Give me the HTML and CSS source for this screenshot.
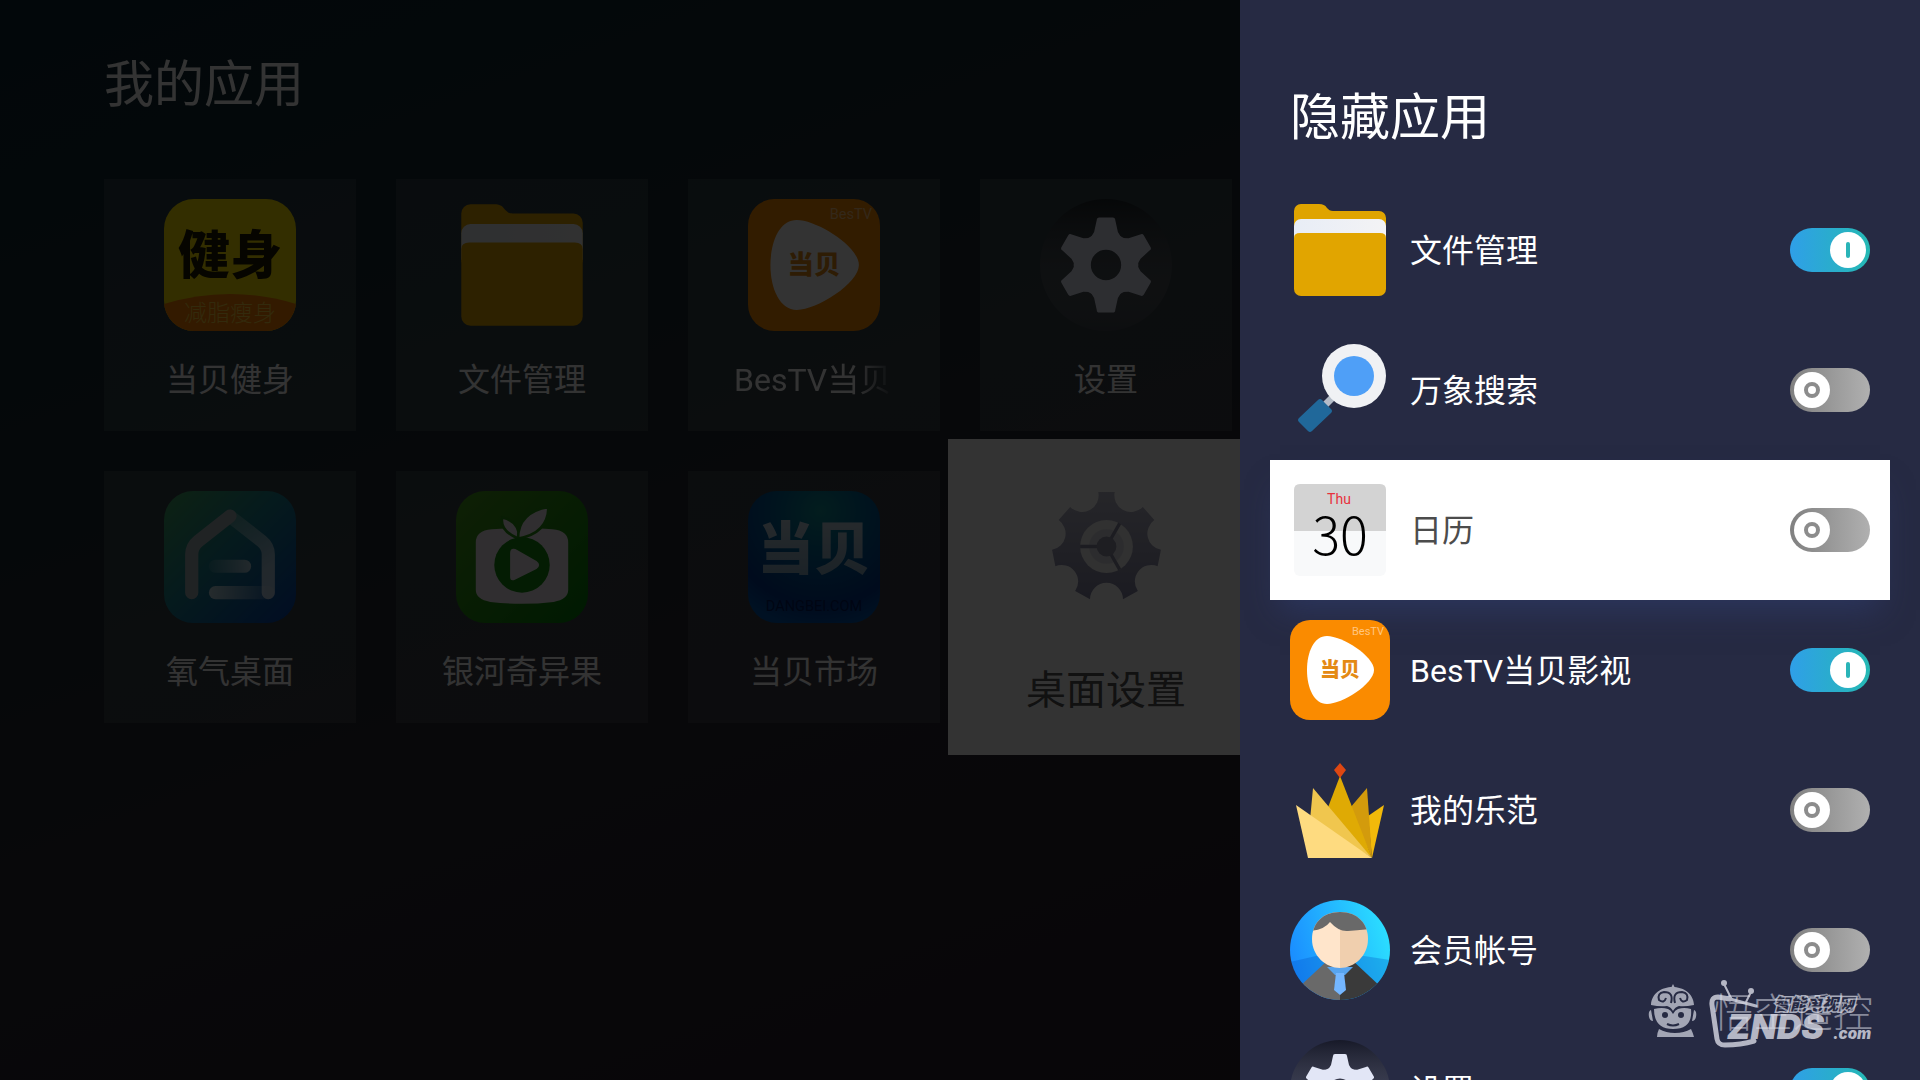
FILE: index.html
```html
<!DOCTYPE html>
<html lang="zh-CN">
<head>
    <meta charset="UTF-8">
    <meta name="viewport" content="width=device-width, initial-scale=1.0">
    <title>隐藏应用</title>
    <link rel="stylesheet" href="styles.css">
</head>
<body>

    <!-- Shared icons -->
    <svg class="sprite" aria-hidden="true">
        <defs>
            <linearGradient id="paper" x1="0" y1="0" x2="1" y2="0">
                <stop offset="0" stop-color="#e8edf6"/>
                <stop offset="1" stop-color="#f3f3f5"/>
            </linearGradient>
            <linearGradient id="gearDisc" x1="0" y1="0" x2="0" y2="1">
                <stop offset="0" stop-color="#000" stop-opacity=".4"/>
                <stop offset="1" stop-color="#fff" stop-opacity=".04"/>
            </linearGradient>
        </defs>

        <symbol id="folder" viewBox="0 0 100 100">
            <path fill="#dfa400" d="M4 11a7 7 0 0 1 7-7h18c4 0 6 1 8 4 2 2 3 3 6 3h46a7 7 0 0 1 7 7v30H4z"/>
            <path fill="url(#paper)" d="M4 26a7 7 0 0 1 7-7h78a7 7 0 0 1 7 7v20H4z"/>
            <path fill="#e1a500" d="M4 38q0-5 6-5h80q6 0 6 5V89a7 7 0 0 1-7 7H11a7 7 0 0 1-7-7z"/>
        </symbol>

        <symbol id="bestv" viewBox="0 0 100 100">
            <rect fill="#fa8b00" width="100" height="100" rx="20"/>
            <path fill="#fff" d="M37 16C52 16 84 36 84 50S52 84 37 84C24 84 17 68 17 50S24 16 37 16z"/>
            <text class="icon-black" x="50" y="57" font-size="20" fill="#e48a14">当贝</text>
            <text class="icon-latin" x="78" y="15" font-size="11" fill="#ffc680">BesTV</text>
        </symbol>

        <symbol id="gear" viewBox="0 0 100 100">
            <circle cx="50" cy="50" r="50" fill="url(#gearDisc)"/>
            <g transform="translate(50 50)" fill="#e2e6f6">
                <circle r="18" fill="none" stroke="#e2e6f6" stroke-width="13"/>
                <path id="tooth" d="M-5-36H5q2 0 2 2l2 9 3 5H-12l3-5 2-9q0-2 2-2z"/>
                <use href="#tooth" transform="rotate(60)"/>
                <use href="#tooth" transform="rotate(120)"/>
                <use href="#tooth" transform="rotate(180)"/>
                <use href="#tooth" transform="rotate(240)"/>
                <use href="#tooth" transform="rotate(300)"/>
            </g>
        </symbol>
    </svg>

    <main class="desktop">
        <h1 class="title">我的应用</h1>
        <div class="apps">
            <button class="app" type="button">
                <svg class="app-icon" viewBox="0 0 132 132" aria-hidden="true">
                    <clipPath id="fitClip"><rect width="132" height="132" rx="30"/></clipPath>
                    <g clip-path="url(#fitClip)">
                        <rect width="132" height="132" fill="#fee600"/>
                        <path fill="#ff8000" d="M0 105Q66 85 132 105V132H0z"/>
                    </g>
                    <text class="icon-black" x="66" y="75" font-size="52" fill="#201c00">健身</text>
                    <text class="icon-thin" x="66" y="122" font-size="23" fill="#ffd040">减脂瘦身</text>
                </svg>
                <span class="app-name">当贝健身</span>
            </button>
            <button class="app" type="button">
                <svg class="app-icon" aria-hidden="true"><use href="#folder"/></svg>
                <span class="app-name">文件管理</span>
            </button>
            <button class="app" type="button">
                <svg class="app-icon" aria-hidden="true"><use href="#bestv"/></svg>
                <span class="app-name fade">BesTV当贝影视</span>
            </button>
            <button class="app" type="button">
                <svg class="app-icon" aria-hidden="true"><use href="#gear"/></svg>
                <span class="app-name">设置</span>
            </button>
            <button class="app" type="button">
                <svg class="app-icon" viewBox="0 0 100 100" aria-hidden="true">
                    <defs>
                        <linearGradient id="homeBg" x1="0" y1="0" x2="1" y2="1">
                            <stop offset="0" stop-color="#44a860"/>
                            <stop offset=".45" stop-color="#1c8290"/>
                            <stop offset="1" stop-color="#0640b0"/>
                        </linearGradient>
                        <linearGradient id="roof" gradientUnits="userSpaceOnUse" x1="50" y1="18" x2="79" y2="60">
                            <stop offset="0" stop-color="#fff" stop-opacity=".2"/>
                            <stop offset="1" stop-color="#fff" stop-opacity=".65"/>
                        </linearGradient>
                        <linearGradient id="bar" gradientUnits="userSpaceOnUse" x1="35" y1="0" x2="66" y2="0">
                            <stop offset="0" stop-color="#fff" stop-opacity=".1"/>
                            <stop offset="1" stop-color="#fff" stop-opacity=".65"/>
                        </linearGradient>
                        <linearGradient id="floor" gradientUnits="userSpaceOnUse" x1="35" y1="0" x2="79" y2="0">
                            <stop offset="0" stop-color="#fff" stop-opacity=".7"/>
                            <stop offset="1" stop-color="#fff" stop-opacity=".1"/>
                        </linearGradient>
                    </defs>
                    <rect width="100" height="100" rx="22" fill="url(#homeBg)"/>
                    <g fill="none" stroke-width="10" stroke-linecap="round" stroke-linejoin="round">
                        <path stroke="url(#floor)" d="M39 77H79"/>
                        <path stroke="url(#bar)" d="M39 57H61"/>
                        <path stroke="url(#roof)" d="M51 20L74 38q5 4 5 10V77"/>
                        <path stroke="#a2afb4" d="M50 19L26 38q-5 4-5 10V77"/>
                    </g>
                </svg>
                <span class="app-name">氧气桌面</span>
            </button>
            <button class="app" type="button">
                <svg class="app-icon" viewBox="0 0 100 100" aria-hidden="true">
                    <defs>
                        <linearGradient id="green" x1="0" y1="0" x2="1" y2="1">
                            <stop offset="0" stop-color="#4a9c1c"/>
                            <stop offset="1" stop-color="#008008"/>
                        </linearGradient>
                    </defs>
                    <rect width="100" height="100" rx="22" fill="url(#green)"/>
                    <path fill="#eee6ee" d="M27 29q23-2 46 0 12 1 12 10V75q0 7-11 9-24 3-48 0-11-2-11-9V39q0-9 12-10z"/>
                    <g fill="#eee6ee" stroke="#2c9014" stroke-width="2">
                        <path d="M47 36Q33 30 35 20 48 23 48 36z"/>
                        <path d="M47 36Q47 16 70 12 70 32 47 36z"/>
                    </g>
                    <circle cx="50" cy="56" r="21" fill="#168a10"/>
                    <path fill="#eee6ee" d="M41 47q0-4 4-3l16 9q4 3 0 6L45 67q-4 2-4-2z"/>
                </svg>
                <span class="app-name">银河奇异果</span>
            </button>
            <button class="app" type="button">
                <svg class="app-icon" viewBox="0 0 100 100" aria-hidden="true">
                    <defs>
                        <radialGradient id="market" cx=".55" cy=".15" r=".9">
                            <stop offset="0" stop-color="#109098"/>
                            <stop offset=".4" stop-color="#006098"/>
                            <stop offset=".8" stop-color="#003890"/>
                            <stop offset="1" stop-color="#0058b0"/>
                        </radialGradient>
                        <linearGradient id="silver" x1="0" y1="0" x2="0" y2="1">
                            <stop offset="0" stop-color="#cfdbe6"/>
                            <stop offset="1" stop-color="#7fa5bd"/>
                        </linearGradient>
                    </defs>
                    <rect width="100" height="100" rx="22" fill="url(#market)"/>
                    <text class="icon-black" x="50" y="59" font-size="43" fill="url(#silver)">当贝</text>
                    <text class="icon-latin" x="50" y="91" font-size="11" fill="#001c60">DANGBEI.COM</text>
                </svg>
                <span class="app-name">当贝市场</span>
            </button>
            <button class="app focused" type="button">
                <svg class="app-icon" viewBox="0 0 100 100" aria-hidden="true">
                    <defs>
                        <linearGradient id="steel" x1="0" y1="0" x2="0" y2="1">
                            <stop offset="0" stop-color="#bcbccc"/>
                            <stop offset="1" stop-color="#8686a6"/>
                        </linearGradient>
                    </defs>
                    <g transform="translate(50 50)">
                        <path fill="url(#steel)" d="M-5-33H5A10 10 0 0 0 22-24L29-16A10 10 0 0 0 33 2L31 12A10 10 0 0 0 19 27L10 32A10 10 0 0 0-10 32L-19 27A10 10 0 0 0-31 12L-33 2A10 10 0 0 0-29-16L-22-24A10 10 0 0 0-5-33z"/>
                        <circle r="16" fill="#f2f2f2"/>
                        <circle r="8" fill="none" stroke="#dcdce4" stroke-width="5"/>
                        <path stroke="#8c8ca4" stroke-width="2" d="M0 0H-16M0 0L8-14M0 0L8 14"/>
                        <circle r="6" fill="#9494ac"/>
                    </g>
                </svg>
                <span class="app-name">桌面设置</span>
            </button>
        </div>
    </main>

    <aside class="panel">
        <h2 class="title panel-title">隐藏应用</h2>
        <ul class="hide-list">
            <li>
                <label class="row">
                    <svg class="row-icon" aria-hidden="true"><use href="#folder"/></svg>
                    <span class="row-name">文件管理</span>
                    <input class="switch" type="checkbox" checked>
                </label>
            </li>
            <li>
                <label class="row">
                    <svg class="row-icon" viewBox="0 0 100 100" aria-hidden="true">
                        <path stroke="#b4bcc8" stroke-width="7" d="M34 66L46 54"/>
                        <path fill="#20689a" d="M28 60q2-2 4 0l9 9q2 2 0 4L22 91q-2 2-4 0L9 82q-2-2 0-4z"/>
                        <circle cx="64" cy="36" r="32" fill="#f0f1f4"/>
                        <circle cx="64" cy="36" r="20" fill="#4f9ff7"/>
                    </svg>
                    <span class="row-name">万象搜索</span>
                    <input class="switch" type="checkbox">
                </label>
            </li>
            <li>
                <label class="row focused">
                    <svg class="row-icon" viewBox="0 0 100 100" aria-hidden="true">
                        <rect x="4" y="4" width="92" height="92" rx="6" fill="#f8f9fa"/>
                        <path fill="#d3d3d3" d="M4 51V10q0-6 6-6h80q6 0 6 6V51z"/>
                        <text class="icon-latin" x="49" y="24" font-size="14" fill="#e8303c">Thu</text>
                        <text class="icon-thin" x="50" y="75" font-size="52" fill="#000">30</text>
                    </svg>
                    <span class="row-name">日历</span>
                    <input class="switch" type="checkbox">
                </label>
            </li>
            <li>
                <label class="row">
                    <svg class="row-icon" aria-hidden="true"><use href="#bestv"/></svg>
                    <span class="row-name">BesTV当贝影视</span>
                    <input class="switch" type="checkbox" checked>
                </label>
            </li>
            <li>
                <label class="row">
                    <svg class="row-icon" viewBox="0 0 100 100" aria-hidden="true">
                        <path fill="#f2b90a" d="M94 45L82 98 78 56z"/>
                        <path fill="#d39b0c" d="M77 28L82 98 60 48z"/>
                        <path fill="#dfaa04" d="M50 16L82 98 37 50z"/>
                        <path fill="#f0c64e" d="M23 28L82 98 20 60z"/>
                        <path fill="#fedb80" d="M6 45L82 98H18z"/>
                        <path fill="#dd4712" d="M50 3l6 7-6 8-6-8z"/>
                    </svg>
                    <span class="row-name">我的乐范</span>
                    <input class="switch" type="checkbox">
                </label>
            </li>
            <li>
                <label class="row">
                    <svg class="row-icon" viewBox="0 0 100 100" aria-hidden="true">
                        <defs>
                            <linearGradient id="sky" x1="0" y1=".6" x2="1" y2=".3">
                                <stop offset="0" stop-color="#1a8cff"/>
                                <stop offset="1" stop-color="#2ce0ff"/>
                            </linearGradient>
                            <clipPath id="disc"><circle cx="50" cy="50" r="50"/></clipPath>
                            <clipPath id="head"><path d="M50 12C68 12 78 24 78 39 78 56 64 68 50 68S22 56 22 39C22 24 32 12 50 12z"/></clipPath>
                        </defs>
                        <g clip-path="url(#disc)">
                            <rect width="100" height="100" fill="url(#sky)"/>
                            <path fill="#0050c0" fill-opacity=".3" d="M0 62L26 56H74L100 60V100H0z"/>
                            <path fill="#696969" d="M50 60H38L8 88V100H50z"/>
                            <path fill="#3a3a3a" d="M50 60H62L92 88V100H50z"/>
                            <path fill="#58a4ee" d="M37 67H63L55 75H45z"/>
                            <path fill="#74b6ff" d="M46 73H54L56 90 50 95 44 90z"/>
                        </g>
                        <g clip-path="url(#head)">
                            <rect width="50" height="100" fill="#ffe5cb"/>
                            <rect x="50" width="50" height="100" fill="#f0cfae"/>
                            <path fill="#696969" d="M20 31Q34 30 40 22 49 32 58 31T80 29V0H20z"/>
                        </g>
                    </svg>
                    <span class="row-name">会员帐号</span>
                    <input class="switch" type="checkbox">
                </label>
            </li>
            <li>
                <label class="row">
                    <svg class="row-icon" aria-hidden="true"><use href="#gear"/></svg>
                    <span class="row-name">设置</span>
                    <input class="switch" type="checkbox" checked>
                </label>
            </li>
        </ul>
    </aside>

    <!-- Watermark -->
    <svg class="watermark" viewBox="0 0 240 76" aria-hidden="true">
        <g fill="#a2a5b4">
            <path d="M11 29C12 5 53 5 54 29q-10 2-15 1-4 1-6 5-2-4-6-5-7 1-16-1z"/>
            <path d="M31 12l2-4 2 4z"/>
            <path d="M14 33q8-2 14 0 3 1 5 5 2-4 5-5 6-2 13 0 2 20-18 20-19 0-19-20z"/>
            <path d="M11 34q-3 1-2 7 1 4 4 4zM54 34q3 1 2 7-1 4-4 4zM19 53q-2 4-2 8h37q-1-4-3-8-7 4-16 4t-16-4z"/>
        </g>
        <g fill="none" stroke="#262a43" stroke-width="2">
            <path d="M31 27q3-11-7-11-7 1-5 8 5 4 7-2M35 27q-3-11 7-11 7 1 5 8-5 4-7-2"/>
            <path d="M27 48q6 3 12 0"/>
        </g>
        <g fill="#262a43"><circle cx="25" cy="39" r="3"/><circle cx="41" cy="39" r="3"/></g>
        <g fill="none" stroke="#b4b6c4" stroke-linecap="round">
            <path stroke-width="5" d="M90 23L78 21q-7 0-6 8l5 34q1 6 8 6 16 0 29-4"/>
            <path stroke-width="3" d="M90 23L116 30"/>
            <path stroke-width="2" d="M91 22L84 8M106 26l5-10"/>
        </g>
        <circle cx="84" cy="7" r="3" fill="#b4b6c4"/>
        <circle cx="111" cy="15" r="3" fill="#b4b6c4"/>
        <text class="mark-site" x="134" y="34" font-size="16">智能电视网</text>
        <text class="mark-logo" x="87" y="63" font-size="34">ZNDS</text>
        <text class="mark-logo" x="193" y="63" font-size="15">.com</text>
        <text class="mark-name" x="73" y="51" font-size="40">悟空遥控</text>
    </svg>

</body>
</html>
```

FILE: styles.css
```css
/* General Styling */
* {
    box-sizing: border-box;
}

body {
    font-family: Roboto, "Noto Sans CJK SC", sans-serif;
    margin: 0;
    display: flex;
    height: 100vh;
    background: #262a43;
    color: #fff;
    overflow: hidden;
    position: relative;
}

.sprite {
    position: absolute;
    width: 0;
    height: 0;
}

.title {
    margin: 0;
    font-size: 50px;
    line-height: 60px;
    font-weight: 400;
}

/* Desktop behind the panel */
.desktop {
    flex: 1;
    min-width: 0;
    padding: 55px 0 0 104px;
    background: linear-gradient(160deg, #0c2632 0%, #1c2c34 35%, #2a2a34 60%, #281e2c 100%);
    position: relative;
    overflow: hidden;
}

.desktop::after {
    content: "";
    position: absolute;
    inset: 0;
    background: rgba(0, 0, 0, 0.8);
}

.apps {
    display: grid;
    grid-template-columns: repeat(4, 252px);
    grid-auto-rows: 252px;
    gap: 40px;
    margin-top: 64px;
}

.app {
    display: flex;
    flex-direction: column;
    align-items: center;
    gap: 28px;
    padding: 20px;
    border: none;
    background: rgba(255, 255, 255, 0.1);
    color: #fff;
    font-family: inherit;
    font-size: 32px;
    line-height: 42px;
    cursor: pointer;
}

.app-icon {
    flex: none;
    width: 132px;
    height: 132px;
}

.app-name {
    max-width: 160px;
    overflow: hidden;
    white-space: nowrap;
}

.app-name.fade {
    mask-image: linear-gradient(90deg, #000 75%, transparent 100%);
}

.app.focused {
    margin: -32px;
    padding: 25px;
    gap: 36px;
    background: #fff;
    color: #555;
    font-size: 40px;
    line-height: 52px;
}

.app.focused .app-icon {
    width: 165px;
    height: 165px;
}

/* Side panel */
.panel {
    flex: none;
    width: 680px;
    padding: 88px 30px 0;
    background: #262a43;
    overflow: hidden;
}

.panel-title {
    padding: 0 20px;
}

.hide-list {
    list-style: none;
    margin: 32px 0 0;
    padding: 0;
}

.row {
    display: flex;
    align-items: center;
    gap: 20px;
    padding: 20px;
    font-size: 32px;
    line-height: 42px;
    cursor: pointer;
}

.row.focused {
    background: #fff;
    color: #4c4c4c;
    box-shadow: 0 20px 30px -10px rgba(50, 66, 120, 0.5);
}

.row-icon {
    flex: none;
    width: 100px;
    height: 100px;
}

.row-name {
    flex: 1;
    padding-top: 2px;
}

/* Switch */
.switch {
    appearance: none;
    flex: none;
    display: grid;
    grid-template-columns: 36px;
    align-items: center;
    justify-items: center;
    width: 80px;
    height: 44px;
    margin: 0;
    padding: 4px;
    border-radius: 22px;
    background: linear-gradient(90deg, #808080, #b0b0b0);
    cursor: pointer;
}

.switch::before,
.switch::after {
    content: "";
    grid-area: 1 / 1;
    border-radius: 50%;
}

.switch::before {
    width: 36px;
    height: 36px;
    background: #fff;
}

.switch::after {
    box-sizing: border-box;
    width: 16px;
    height: 16px;
    border: 4px solid #8c8c8c;
}

.switch:checked {
    justify-content: end;
    background: linear-gradient(90deg, #2f9fe8, #25b9b4);
}

.switch:checked::after {
    width: 4px;
    border: none;
    border-radius: 2px;
    background: #2ab4b8;
}

/* Text inside icons */
.icon-black,
.icon-thin,
.icon-latin {
    text-anchor: middle;
}

.icon-black {
    font-family: "Noto Sans CJK SC", sans-serif;
    font-weight: 900;
}

.icon-thin {
    font-family: "Noto Sans CJK SC", sans-serif;
    font-weight: 300;
}

.icon-latin {
    font-family: Roboto, sans-serif;
}

/* Watermark */
.watermark {
    position: absolute;
    right: 40px;
    bottom: 28px;
    width: 240px;
    height: 76px;
    pointer-events: none;
}

.mark-name {
    font-family: "Noto Sans CJK SC", sans-serif;
    font-weight: 300;
    fill: #dcdee8;
    fill-opacity: 0.55;
}

.mark-site {
    font-family: "Noto Sans CJK SC", sans-serif;
    font-weight: 900;
    font-style: italic;
    fill: #262a43;
    stroke: #a8abba;
    stroke-width: 3px;
    paint-order: stroke;
}

.mark-logo {
    font-family: Inter, sans-serif;
    font-weight: 900;
    font-style: italic;
    fill: #b4b6c4;
}
```
